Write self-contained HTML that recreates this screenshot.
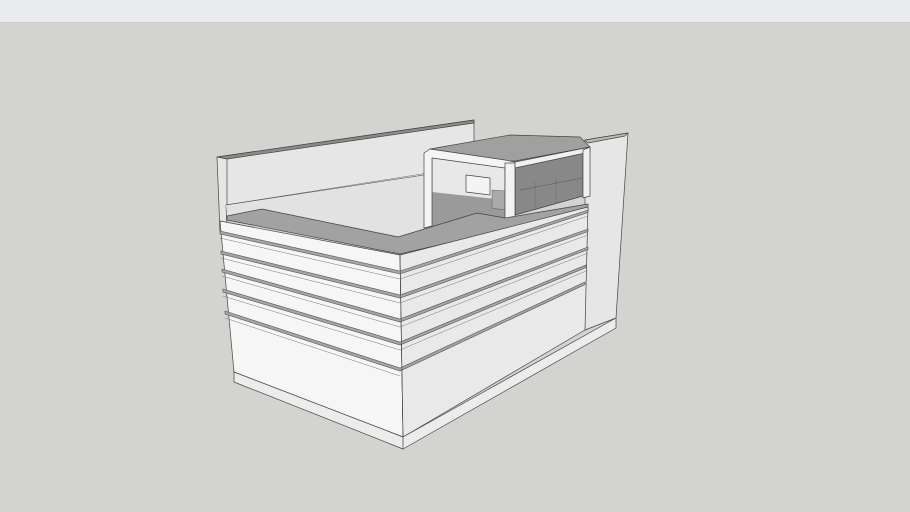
<!DOCTYPE html>
<html><head><style>
html,body{margin:0;padding:0;width:910px;height:512px;overflow:hidden;background:#d3d3cf;}
svg{display:block}
</style></head><body>
<svg width="910" height="512" viewBox="0 0 910 512" xmlns="http://www.w3.org/2000/svg">
<rect x="0" y="0" width="910" height="22" fill="#e9ebee"/>
<line x1="0" y1="22.5" x2="910" y2="22.5" stroke="#c9cbce"/>
<rect x="0" y="23" width="910" height="489" fill="#d3d3cf"/>
<g stroke="#444" stroke-width="0.7" stroke-linejoin="round">
<!-- right tall side panel -->
<polygon points="585,140 628,133 616,318 585,330" fill="#e6e6e6"/>
<polygon points="585,140 628,133 625,136 588,143" fill="#bbb"/>
<!-- back wall -->
<polygon points="217,157 474,120 474,166 226,205 227,232 220,232" fill="#e6e6e6"/>
<polygon points="217,157 474,120 474,123 227,159" fill="#8a8a8a"/>
<line x1="227" y1="159" x2="227" y2="205"/>
<!-- inside floor area -->
<polygon points="226,205 474,166 474,218 400,236 262,209 227,217" fill="#e2e2e2" stroke="none"/>
<line x1="226" y1="205" x2="424" y2="175" stroke-width="0.5"/>
<!-- glass box interior -->
<polygon points="432,158 505,165 505,218 432,226" fill="#e8e8e8"/>
<polygon points="432,192 505,200 505,218 432,226" fill="#9a9a9a" stroke="none"/>
<polygon points="466,175 490,178 490,195 466,192" fill="#f4f4f4"/>
<polygon points="492,190 505,191 505,210 492,208" fill="#aaa" stroke-width="0.4"/>
<polygon points="515,165 583,152 583,196 515,215" fill="#888"/>
<line x1="520" y1="190" x2="583" y2="178" stroke="#666"/>
<line x1="535" y1="182" x2="535" y2="210" stroke="#666" stroke-width="0.5"/>
<line x1="556" y1="178" x2="556" y2="204" stroke="#666" stroke-width="0.5"/>
<!-- glass frame -->
<polygon points="430,149 510,135 580,137 590,147 515,161 505,161" fill="#a0a0a0"/>
<polygon points="424,153 430,149 505,160 515,162 515,168 505,168 432,158 432,226 424,228" fill="#f4f4f4"/>
<polygon points="505,163 515,163 515,218 505,220" fill="#f2f2f2"/>
<polygon points="515,162 590,147 590,152 515,168" fill="#f0f0f0"/>
<polygon points="583,150 590,147 590,196 583,198" fill="#f0f0f0"/>
<!-- counter top -->
<polygon points="227,216 262,209 398,237 477,213 505,218 588,204 588,210 400,254 227,220" fill="#a2a2a2"/>
<!-- front left face -->
<polygon points="220,221 400,255 403,437 234,372" fill="#f6f6f6"/>
<!-- front right face -->
<polygon points="400,255 588,207 585,330 403,437" fill="#e9e9e9"/>
<!-- plinth -->
<polygon points="234,372 403,437 616,318 616,328 403,449 234,382" fill="#ececec"/>
<line x1="403" y1="437" x2="403" y2="449"/>
</g>
<!-- stripes -->
<g stroke="#555" stroke-width="0.6" fill="#a5a5a5">
<polygon points="220,231 400,271 588,210 588,212.5 400,274 220,234"/>
<polygon points="221,251 400,295 588,229 588,231.5 400,298 221,254"/>
<polygon points="222,269 400,319 588,247 588,249.5 400,322 222,272"/>
<polygon points="223,289 400,342 586,265 586,267.5 400,345 223,292"/>
<polygon points="225,311 400,368 585,282 585,284.5 400,371 225,314"/>
</g>
<g stroke="#777" stroke-width="0.5">
<line x1="220" y1="238" x2="400" y2="279"/>
<line x1="221" y1="258" x2="400" y2="303"/>
<line x1="222" y1="276" x2="400" y2="327"/>
<line x1="223" y1="296" x2="400" y2="350"/>
<line x1="225" y1="318" x2="400" y2="376"/>
<line x1="400" y1="279" x2="588" y2="216"/>
<line x1="400" y1="303" x2="588" y2="235"/>
<line x1="400" y1="327" x2="588" y2="253"/>
<line x1="400" y1="350" x2="586" y2="271"/>
<line x1="400" y1="255" x2="403" y2="437" stroke="#444"/>
</g>
</svg>
</body></html>
